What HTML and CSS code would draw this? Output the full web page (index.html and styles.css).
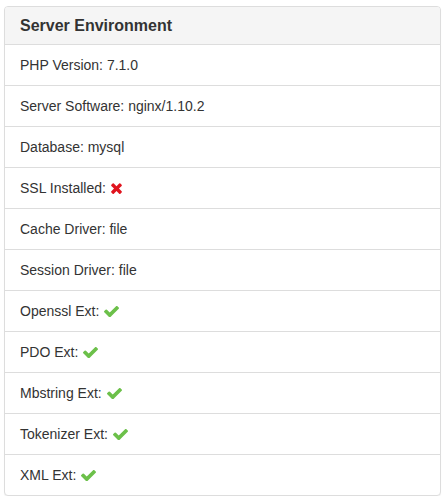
FILE: index.html
```html
<!DOCTYPE html>
<html>
<head>
<meta charset="utf-8">
<link rel="stylesheet" href="styles.css">
</head>
<body>
<div class="panel">
  <div class="panel-heading"><h3 class="panel-title">Server Environment</h3></div>
  <ul class="list">
    <li class="item">PHP Version: 7.1.0</li>
    <li class="item">Server Software: nginx/1.10.2</li>
    <li class="item">Database: mysql</li>
    <li class="item">SSL Installed: <svg class="icon cross" viewBox="110 230 1188 1324" width="11" height="12"><path d="M1298 1322q0 40-28 68l-136 136q-28 28-68 28t-68-28l-294-294-294 294q-28 28-68 28t-68-28l-136-136q-28-28-28-68t28-68l294-294-294-294q-28-28-28-68t28-68l136-136q28-28 68-28t68 28l294 294 294-294q28-28 68-28t68 28l136 136q28 28 28 68t-28 68l-294 294 294 294q28 28 28 68z"/></svg></li>
    <li class="item">Cache Driver: file</li>
    <li class="item">Session Driver: file</li>
    <li class="item">Openssl Ext: <svg class="icon check" viewBox="121 402 1550 1024" width="15" height="11"><path d="M1671 566q0 40-28 68l-724 724-136 136q-28 28-68 28t-68-28l-136-136-362-362q-28-28-28-68t28-68l136-136q28-28 68-28t68 28l294 295 656-657q28-28 68-28t68 28l136 136q28 28 28 68z"/></svg></li>
    <li class="item">PDO Ext: <svg class="icon check" viewBox="121 402 1550 1024" width="15" height="11"><path d="M1671 566q0 40-28 68l-724 724-136 136q-28 28-68 28t-68-28l-136-136-362-362q-28-28-28-68t28-68l136-136q28-28 68-28t68 28l294 295 656-657q28-28 68-28t68 28l136 136q28 28 28 68z"/></svg></li>
    <li class="item">Mbstring Ext: <svg class="icon check" viewBox="121 402 1550 1024" width="15" height="11"><path d="M1671 566q0 40-28 68l-724 724-136 136q-28 28-68 28t-68-28l-136-136-362-362q-28-28-28-68t28-68l136-136q28-28 68-28t68 28l294 295 656-657q28-28 68-28t68 28l136 136q28 28 28 68z"/></svg></li>
    <li class="item">Tokenizer Ext: <svg class="icon check" viewBox="121 402 1550 1024" width="15" height="11"><path d="M1671 566q0 40-28 68l-724 724-136 136q-28 28-68 28t-68-28l-136-136-362-362q-28-28-28-68t28-68l136-136q28-28 68-28t68 28l294 295 656-657q28-28 68-28t68 28l136 136q28 28 28 68z"/></svg></li>
    <li class="item">XML Ext: <svg class="icon check" viewBox="121 402 1550 1024" width="15" height="11"><path d="M1671 566q0 40-28 68l-724 724-136 136q-28 28-68 28t-68-28l-136-136-362-362q-28-28-28-68t28-68l136-136q28-28 68-28t68 28l294 295 656-657q28-28 68-28t68 28l136 136q28 28 28 68z"/></svg></li>
  </ul>
</div>
</body>
</html>
```
FILE: styles.css
```css
html, body {
  margin: 0;
  padding: 0;
  background: #fff;
}
body {
  padding: 6px 5px 0 4px;
  font-family: "Liberation Sans", Arial, sans-serif;
  font-size: 14px;
  line-height: 20px;
  color: #333;
}
.panel {
  border: 1px solid #ddd;
  border-radius: 4px;
  box-shadow: 0 1px 1px rgba(0,0,0,0.05);
  background: #fff;
  overflow: hidden;
}
.panel-heading {
  background: #f5f5f5;
  border-bottom: 1px solid #ddd;
  padding: 10px 15px;
}
.panel-title {
  margin: 0;
  font-size: 16px;
  font-weight: bold;
  line-height: 17px;
  color: #333;
}
.list {
  list-style: none;
  margin: 0;
  padding: 0;
}
.item {
  padding: 10px 15px;
  border-bottom: 1px solid #ddd;
}
.item:last-child {
  border-bottom: none;
}
.icon {
  vertical-align: -1px;
  margin-left: 1px;
}
.cross { fill: #e0141e; }
.check { fill: #6cc04a; }
```
